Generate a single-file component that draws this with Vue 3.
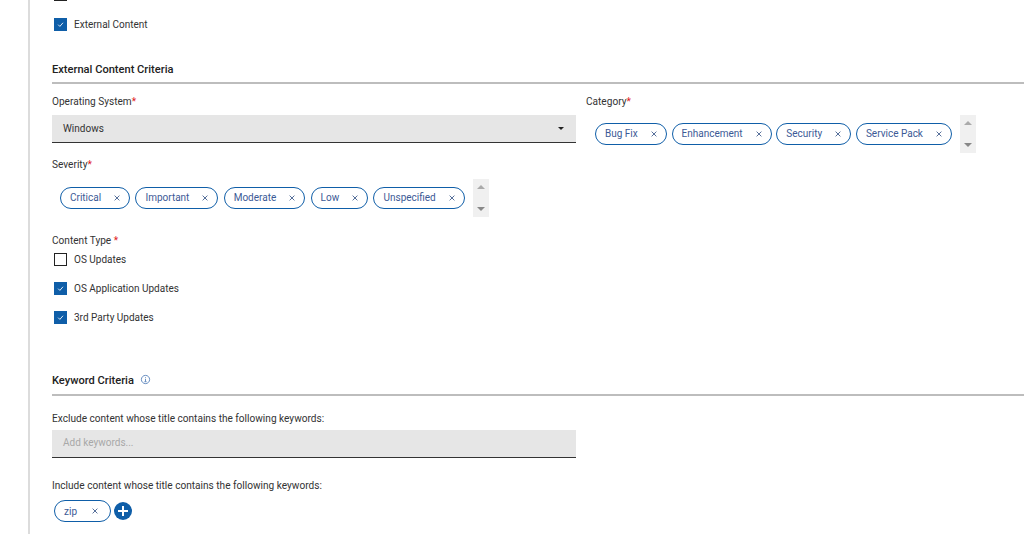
<script setup>
const categories = ['Bug Fix', 'Enhancement', 'Security', 'Service Pack']
const severities = ['Critical', 'Important', 'Moderate', 'Low', 'Unspecified']
const contentTypes = [
  { label: 'OS Updates', checked: false },
  { label: 'OS Application Updates', checked: true },
  { label: '3rd Party Updates', checked: true }
]
</script>

<template>
  <div class="page">
    <div class="check-row check-clipped">
      <span class="box"></span>
    </div>
    <div class="check-row check-external">
      <span class="box checked">
        <svg viewBox="0 0 14 14"><path d="M4 7.2l2.2 2.2L10.2 4.8" /></svg>
      </span>
      <span>External Content</span>
    </div>

    <h4 class="section-title">External Content Criteria</h4>
    <div class="columns">
      <div class="col-left">
        <label class="field-label">Operating System<em>*</em></label>
        <div class="select">
          <span>Windows</span>
          <span class="caret"></span>
        </div>

        <label class="field-label severity-label">Severity<em>*</em></label>
        <div class="chip-box">
          <div class="chips">
            <span v-for="s in severities" :key="s" class="chip">
              {{ s }}
              <svg class="chip-x" viewBox="0 0 6 6"><path d="M.6.6l4.8 4.8M5.4.6L.6 5.4" /></svg>
            </span>
          </div>
          <div class="spinner"><i class="up"></i><i class="down"></i></div>
        </div>

        <label class="field-label type-label">Content Type <em>*</em></label>
        <div class="type-list">
          <div v-for="t in contentTypes" :key="t.label" class="check-row">
            <span class="box" :class="{ checked: t.checked }">
              <svg v-if="t.checked" viewBox="0 0 14 14"><path d="M4 7.2l2.2 2.2L10.2 4.8" /></svg>
            </span>
            <span>{{ t.label }}</span>
          </div>
        </div>
      </div>

      <div class="col-right">
        <label class="field-label">Category<em>*</em></label>
        <div class="chip-box">
          <div class="chips">
            <span v-for="c in categories" :key="c" class="chip">
              {{ c }}
              <svg class="chip-x" viewBox="0 0 6 6"><path d="M.6.6l4.8 4.8M5.4.6L.6 5.4" /></svg>
            </span>
          </div>
          <div class="spinner"><i class="up"></i><i class="down"></i></div>
        </div>
      </div>
    </div>

    <h4 class="section-title keyword-title">
      Keyword Criteria
      <svg class="info" viewBox="0 0 12 12">
        <circle cx="6" cy="6" r="4.5" />
        <path d="M6 5.2v3M4.8 8.4h2.4M6 3.4v.8" />
      </svg>
    </h4>
    <label class="field-label exclude-label">Exclude content whose title contains the following keywords:</label>
    <div class="keyword-input">Add keywords...</div>
    <label class="field-label include-label">Include content whose title contains the following keywords:</label>
    <div class="include-row">
      <span class="chip">
        zip
        <svg class="chip-x" viewBox="0 0 6 6"><path d="M.6.6l4.8 4.8M5.4.6L.6 5.4" /></svg>
      </span>
      <svg class="add" viewBox="0 0 18 18">
        <circle cx="9" cy="9" r="9" />
        <path d="M9 4v10M4 9h10" />
      </svg>
    </div>
  </div>
</template>

<style>
html,
body {
  margin: 0;
  background: #fff;
  overflow: hidden;
}
</style>

<style scoped>
.page {
  box-sizing: border-box;
  width: 996px;
  height: 534px;
  margin-left: 28px;
  padding-left: 22px;
  border-left: 2px solid #dcdcdc;
  overflow: hidden;
  font-family: Roboto, "Liberation Sans", sans-serif;
  font-size: 10px;
  color: #2b2b2b;
}

.check-row {
  display: flex;
  align-items: center;
  gap: 7px;
  height: 14px;
  margin-left: 2px;
  font-size: 10px;
  color: #333;
}

.check-clipped {
  margin-top: -13px;
}

.check-external {
  margin-top: 16px;
}

.box {
  box-sizing: border-box;
  flex: none;
  width: 13px;
  height: 13px;
  border: 1px solid #222;
  background: #fff;
}

.box.checked {
  border-color: #0f5ea8;
  background: #0f5ea8;
}

.box svg {
  display: block;
  width: 11px;
  height: 11px;
  fill: none;
  stroke: #fff;
  stroke-width: 1.1;
}

.section-title {
  margin: 32px 0 0;
  padding-bottom: 5px;
  border-bottom: 2px solid #bdbdbd;
  height: 14px;
  line-height: 14px;
  font-size: 11.1px;
  font-weight: 500;
  color: #222;
}

.columns {
  display: flex;
  gap: 10px;
  margin-top: 11px;
}

.col-left {
  flex: none;
  width: 524px;
}

.field-label {
  display: block;
  height: 14px;
  line-height: 14px;
  font-size: 10.1px;
  color: #333;
}

.field-label em {
  font-style: normal;
  color: #e02020;
}

.select {
  box-sizing: border-box;
  display: flex;
  align-items: center;
  justify-content: space-between;
  height: 28px;
  margin-top: 6px;
  padding: 0 12px 1px 11px;
  background: #e6e6e6;
  border-bottom: 1.5px solid #333;
  color: #333;
}

.caret {
  border: 3px solid transparent;
  border-top: 3px solid #222;
  border-bottom: 0;
}

.severity-label {
  margin-top: 15px;
}

.chip-box {
  display: flex;
  align-items: flex-start;
  margin-top: 7px;
}

.col-right .chip-box {
  margin-top: 6px;
}

.chips {
  display: flex;
  gap: 5.3px;
  padding: 8px 8px 0;
}

.chip {
  box-sizing: border-box;
  display: inline-flex;
  align-items: center;
  justify-content: space-between;
  gap: 13px;
  height: 21.5px;
  padding: 0 9px;
  border: 1.3px solid #0f5ea8;
  border-radius: 11px;
  background: #fff;
  color: #3c5a96;
  white-space: nowrap;
}

.chip-x {
  flex: none;
  width: 6px;
  height: 6px;
  fill: none;
  stroke: #44608f;
  stroke-width: 0.9;
}

.spinner {
  flex: none;
  display: flex;
  flex-direction: column;
  justify-content: space-between;
  align-items: center;
  box-sizing: border-box;
  width: 16px;
  height: 38px;
  padding: 6px 0;
  background: #f0f0f0;
}

.spinner i {
  border-left: 4px solid transparent;
  border-right: 4px solid transparent;
}

.spinner .up {
  border-bottom: 4px solid #aaa;
}

.spinner .down {
  border-top: 4px solid #888;
}

.type-label {
  margin-top: 17px;
}

.type-list {
  display: flex;
  flex-direction: column;
  gap: 15px;
  margin-top: 4px;
}

.col-right .chips {
  gap: 4.75px;
  padding-left: 9px;
}

.keyword-title {
  display: flex;
  align-items: center;
  gap: 6px;
  margin-top: 50px;
  padding-bottom: 6px;
}

.info {
  width: 11px;
  height: 11px;
  margin-top: -3px;
  fill: none;
  stroke: #4a78b5;
  stroke-width: 0.9;
}

.exclude-label {
  margin-top: 16px;
}

.keyword-input {
  box-sizing: border-box;
  width: 524px;
  height: 28px;
  margin-top: 4px;
  padding: 0 11px 1px;
  line-height: 26px;
  background: #e6e6e6;
  border-bottom: 1.5px solid #333;
  color: #a8a8a8;
}

.include-label {
  margin-top: 21px;
}

.include-row {
  display: flex;
  align-items: center;
  gap: 3px;
  margin: 7px 0 0 2px;
}

.include-row .chip {
  width: 57px;
  height: 22px;
  padding-right: 12px;
}

.add {
  width: 18px;
  height: 18px;
}

.add circle {
  fill: #0f5ea8;
}

.add path {
  fill: none;
  stroke: #fff;
  stroke-width: 2;
}
</style>
